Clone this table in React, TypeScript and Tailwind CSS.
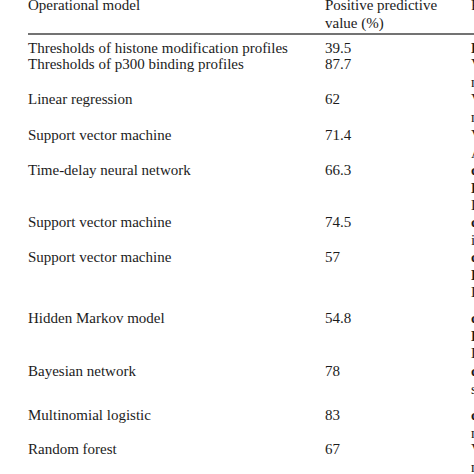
const rows = [
  { model: "Thresholds of histone modification profiles", ppv: "39.5", h: 16, notes: [{ t: "Human", b: true }] },
  { model: "Thresholds of p300 binding profiles", ppv: "87.7", h: 35, notes: [{ t: "Validated" }, { t: "nucleosome" }] },
  { model: "Linear regression", ppv: "62", h: 36, notes: [{ t: "Validated" }, { t: "nucleosome" }] },
  { model: "Support vector machine", ppv: "71.4", h: 35, notes: [{ t: "Validated" }, { t: "ATAC" }] },
  { model: "Time-delay neural network", ppv: "66.3", h: 52, notes: [{ t: "cell", b: true }, { t: "Human", b: true }, { t: "Literature" }] },
  { model: "Support vector machine", ppv: "74.5", h: 35, notes: [{ t: "curated", b: true }, { t: "in vivo" }] },
  { model: "Support vector machine", ppv: "57", h: 61, notes: [{ t: "curated", b: true }, { t: "Human", b: true }, { t: "Literature" }] },
  { model: "Hidden Markov model", ppv: "54.8", h: 53, notes: [{ t: "curated", b: true }, { t: "Human", b: true }, { t: "Literature" }] },
  { model: "Bayesian network", ppv: "78", h: 44, notes: [{ t: "curated", b: true }, { t: "sets" }] },
  { model: "Multinomial logistic", ppv: "83", h: 34, notes: [{ t: "curated", b: true }, { t: "nuclear" }] },
  { model: "Random forest", ppv: "67", h: 40, notes: [{ t: "Validated" }, { t: "nuclear" }] },
]

export default function App() {
  return (
    <div className="w-[474px] h-[474px] overflow-hidden bg-white text-[#1c1c1c] text-[15px] leading-[17.5px] font-['Liberation_Serif','Times_New_Roman',serif]">
      <div className="mt-[-3px] pl-[28px] w-[560px]">
        <div className="flex pb-[1px] border-b-2 border-[#737373]">
          <div className="w-[297px] shrink-0">Operational model</div>
          <div className="w-[146px] shrink-0">
            <div>Positive predictive</div>
            <div>value (%)</div>
          </div>
          <div className="whitespace-nowrap">Reference</div>
        </div>

        <div className="mt-[5px]">
          {rows.map((row, i) => (
            <div key={i} className="flex" style={{ height: row.h }}>
              <div className="w-[297px] shrink-0 whitespace-nowrap">{row.model}</div>
              <div className="w-[146px] shrink-0">{row.ppv}</div>
              <div className="whitespace-nowrap">
                {row.notes.map((n, j) => (
                  <div key={j} className={n.b ? "font-bold" : ""}>
                    {n.t}
                  </div>
                ))}
              </div>
            </div>
          ))}
        </div>
      </div>
    </div>
  )
}
